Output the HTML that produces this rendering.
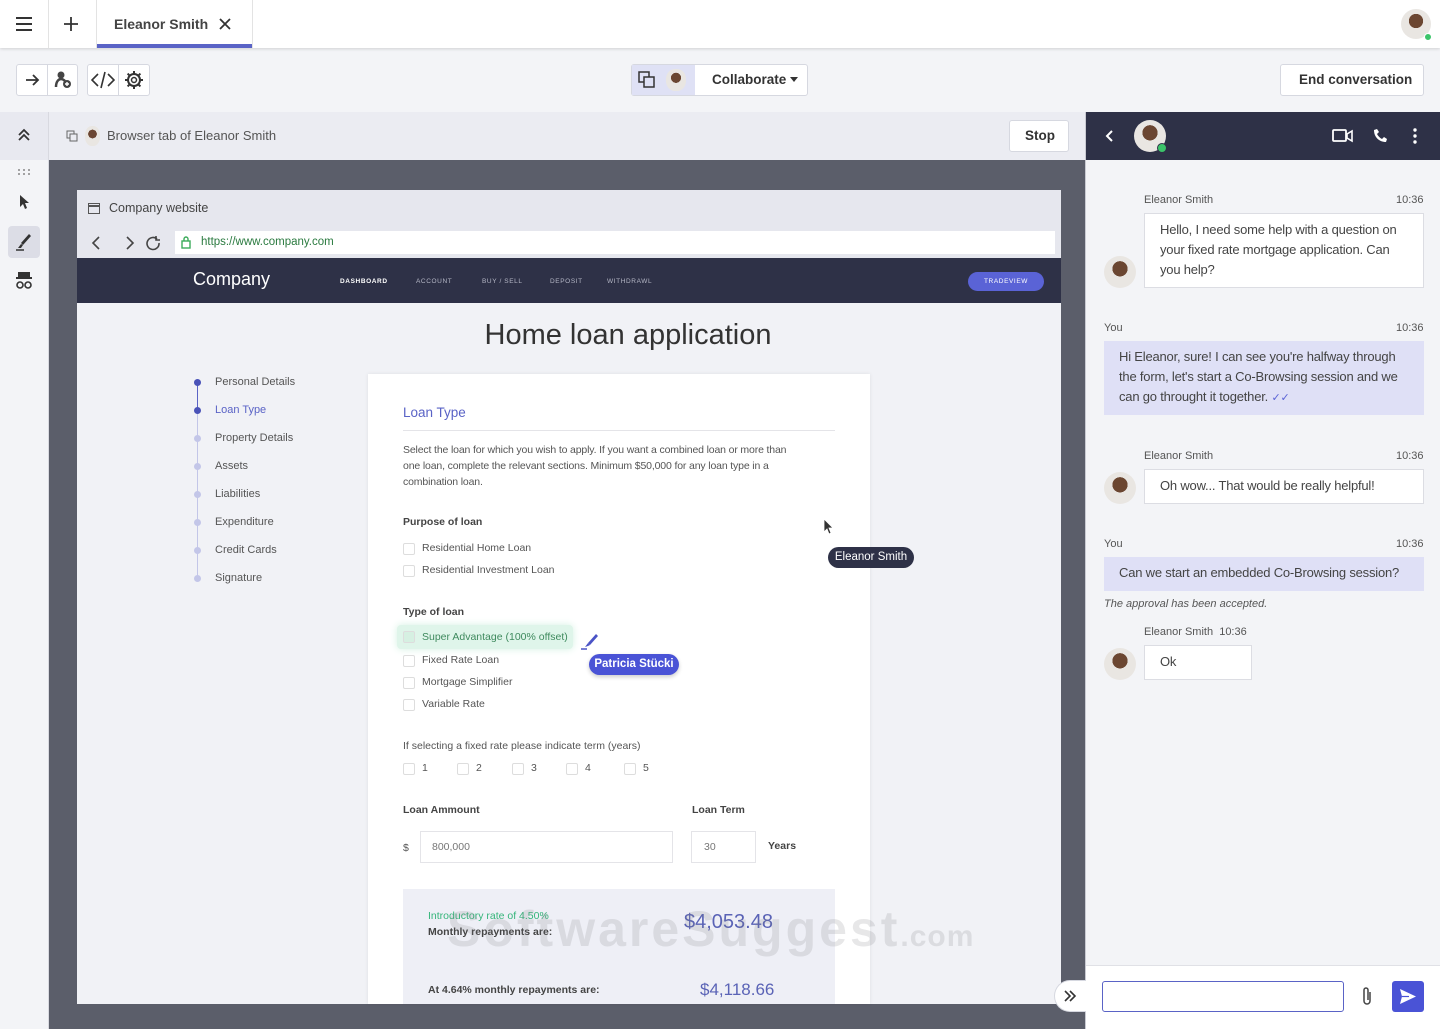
<!DOCTYPE html>
<html><head><meta charset="utf-8">
<style>
*{box-sizing:border-box;margin:0;padding:0}
body{width:1440px;height:1029px;overflow:hidden;font-family:"Liberation Sans",sans-serif;background:#f3f4f7;position:relative;color:#333}
.a{position:absolute}
.btn{position:absolute;background:#fff;border:1px solid #d6d8e0;border-radius:3px}
.av{position:absolute;border-radius:50%;background:radial-gradient(circle at 50% 40%,#6b4631 0 30%,#e9e6e2 31%);}
.step{position:absolute;left:215px;font-size:11px;color:#555}
.dot{position:absolute;left:194px;width:7px;height:7px;border-radius:50%;background:#c3c6e8}
.cb{position:absolute;width:12px;height:12px;border:1px solid #ddd;border-radius:2px;background:#fff}
.lbl{position:absolute;font-size:10.5px;color:#555}
.msg{position:absolute;background:#fff;border:1px solid #dcdde3;font-size:13px;letter-spacing:-0.2px;color:#444;line-height:20px;padding:6px 15px}
.you{position:absolute;background:#dfe0f6;font-size:13px;letter-spacing:-0.2px;color:#444;line-height:20px;padding:6px 15px}
.meta{position:absolute;font-size:11px;color:#555}
</style></head><body>
<!-- top bar -->
<div class="a" style="left:0;top:0;width:1440px;height:48px;background:#fff;box-shadow:0 1px 3px rgba(0,0,0,.15)"></div>
<svg class="a" style="left:15px;top:16px" width="18" height="16"><path d="M1 2h16M1 8h16M1 14h16" stroke="#333" stroke-width="2"/></svg>
<div class="a" style="left:48px;top:0;width:1px;height:48px;background:#e3e3e3"></div>
<svg class="a" style="left:64px;top:17px" width="14" height="14"><path d="M7 0v14M0 7h14" stroke="#333" stroke-width="1.8"/></svg>
<div class="a" style="left:96px;top:0;width:1px;height:48px;background:#e3e3e3"></div>
<div class="a" style="left:114px;top:16px;font-size:14px;font-weight:bold;color:#444">Eleanor Smith</div>
<svg class="a" style="left:219px;top:18px" width="12" height="12"><path d="M1 1l10 10M11 1L1 11" stroke="#333" stroke-width="1.8"/></svg>
<div class="a" style="left:252px;top:0;width:1px;height:48px;background:#e3e3e3"></div>
<div class="a" style="left:97px;top:44px;width:155px;height:4px;background:#5a63c6"></div>
<div class="av" style="left:1401px;top:9px;width:30px;height:30px"></div>
<div class="a" style="left:1424px;top:33px;width:8px;height:8px;border-radius:50%;background:#3cc46a;border:1px solid #fff"></div>

<!-- toolbar -->
<div class="btn" style="left:16px;top:64px;width:62px;height:32px"></div>
<div class="a" style="left:47px;top:64px;width:1px;height:32px;background:#d6d8e0"></div>
<svg class="a" style="left:24px;top:72px" width="16" height="16"><path d="M2 8h12M9 3l5 5-5 5" stroke="#333" stroke-width="1.8" fill="none"/></svg>
<svg class="a" style="left:54px;top:70px" width="18" height="20"><circle cx="7" cy="5" r="3.5" fill="#444"/><path d="M2 17c0-6 3-8 5-8s3 1 4 2" stroke="#444" stroke-width="2.5" fill="none"/><circle cx="13" cy="14" r="4" fill="#444"/><path d="M13 12v4M11 14h4" stroke="#fff" stroke-width="1.4"/></svg>
<div class="btn" style="left:87px;top:64px;width:63px;height:32px"></div>
<div class="a" style="left:118px;top:64px;width:1px;height:32px;background:#d6d8e0"></div>
<svg class="a" style="left:91px;top:71px" width="24" height="18"><path d="M7 3L1 9l6 6M17 3l6 6-6 6M14 1l-4 16" stroke="#333" stroke-width="1.6" fill="none"/></svg>
<svg class="a" style="left:124px;top:70px" width="20" height="20"><circle cx="10" cy="10" r="6" stroke="#333" stroke-width="2" fill="none"/><circle cx="10" cy="10" r="2.5" stroke="#333" stroke-width="1.5" fill="none"/><path d="M10 1v3M10 16v3M1 10h3M16 10h3M3.6 3.6l2.1 2.1M14.3 14.3l2.1 2.1M3.6 16.4l2.1-2.1M14.3 5.7l2.1-2.1" stroke="#333" stroke-width="2"/></svg>

<div class="btn" style="left:631px;top:64px;width:177px;height:32px"></div>
<div class="a" style="left:632px;top:65px;width:63px;height:30px;background:#dfe1f5"></div>
<svg class="a" style="left:638px;top:71px" width="18" height="18"><rect x="1" y="1" width="10" height="10" fill="none" stroke="#333" stroke-width="1.5"/><rect x="6" y="6" width="10" height="10" fill="#dfe1f5" stroke="#333" stroke-width="1.5"/></svg>
<div class="av" style="left:666px;top:69px;width:20px;height:22px;border-radius:45%"></div>
<div class="a" style="left:712px;top:72px;font-size:13.5px;font-weight:bold;color:#333">Collaborate</div>
<div class="a" style="left:790px;top:77px;border:4px solid transparent;border-top:5px solid #333"></div>
<div class="btn" style="left:1280px;top:64px;width:144px;height:32px"></div>
<div class="a" style="left:1299px;top:72px;font-size:13.5px;font-weight:bold;color:#333">End conversation</div>

<!-- left sidebar -->
<div class="a" style="left:0;top:112px;width:48px;height:48px;background:#e8e9f0"></div>
<div class="a" style="left:48px;top:112px;width:1px;height:917px;background:#d8d9e0"></div>
<svg class="a" style="left:17px;top:128px" width="14" height="14"><path d="M2 7l5-5 5 5M2 12l5-5 5 5" stroke="#333" stroke-width="1.8" fill="none"/></svg>
<svg class="a" style="left:17px;top:168px" width="14" height="8"><g fill="#888"><circle cx="2" cy="2" r="1"/><circle cx="7" cy="2" r="1"/><circle cx="12" cy="2" r="1"/><circle cx="2" cy="6" r="1"/><circle cx="7" cy="6" r="1"/><circle cx="12" cy="6" r="1"/></g></svg>
<svg class="a" style="left:19px;top:194px" width="12" height="16"><path d="M1 1v12l3-3 2 5 2-1-2-5h4z" fill="#333"/></svg>
<div class="a" style="left:8px;top:226px;width:32px;height:32px;border-radius:4px;background:#dcdde6"></div>
<svg class="a" style="left:15px;top:232px" width="18" height="20"><path d="M14 2l2 2-8 9-2-2z" fill="#333"/><path d="M6 12l-3 4h3l2-3" fill="#333"/><path d="M1 18h8" stroke="#333" stroke-width="1.5"/></svg>
<svg class="a" style="left:15px;top:272px" width="18" height="18"><path d="M4 1h10v4H4zM1 6h16" stroke="#333" stroke-width="2" fill="#333"/><circle cx="5" cy="13" r="3" stroke="#333" stroke-width="1.6" fill="none"/><circle cx="13" cy="13" r="3" stroke="#333" stroke-width="1.6" fill="none"/></svg>

<!-- browser tab header -->
<div class="a" style="left:49px;top:112px;width:1036px;height:48px;background:#ebecf2"></div>
<svg class="a" style="left:66px;top:130px" width="12" height="12"><rect x="1" y="1" width="7" height="7" fill="none" stroke="#666" stroke-width="1"/><rect x="4" y="4" width="7" height="7" fill="#ebecf2" stroke="#666" stroke-width="1"/></svg>
<div class="av" style="left:85px;top:126px;width:15px;height:20px;border-radius:45%"></div>
<div class="a" style="left:107px;top:128px;font-size:13px;color:#555">Browser tab of Eleanor Smith</div>
<div class="btn" style="left:1009px;top:120px;width:60px;height:32px"></div>
<div class="a" style="left:1025px;top:128px;font-size:13.5px;font-weight:bold;color:#333">Stop</div>

<!-- main dark area -->
<div class="a" style="left:49px;top:160px;width:1036px;height:869px;background:#5b5e6a"></div>
<!-- browser window -->
<div class="a" style="left:77px;top:190px;width:984px;height:814px;background:#f1f2f6;overflow:hidden">
  <div class="a" style="left:0;top:0;width:984px;height:68px;background:#e6e7ee"></div>
  <svg class="a" style="left:11px;top:13px" width="12" height="11"><rect x="0.5" y="0.5" width="11" height="10" fill="none" stroke="#555"/><path d="M0 3h12" stroke="#555" stroke-width="2"/></svg>
  <div class="a" style="left:32px;top:11px;font-size:12.5px;color:#444">Company website</div>
  <svg class="a" style="left:13px;top:45px" width="70" height="16"><path d="M9 2L3 8l6 6M37 2l6 6-6 6" stroke="#444" stroke-width="1.6" fill="none"/><path d="M76 4a6 6 0 1 0 2 4" stroke="#444" stroke-width="1.6" fill="none" transform="translate(-9 0)"/><path d="M66 1v4h4" stroke="#444" stroke-width="1.6" fill="none"/></svg>
  <div class="a" style="left:98px;top:41px;width:880px;height:23px;background:#fff"></div>
  <svg class="a" style="left:104px;top:46px" width="10" height="13"><rect x="1" y="5" width="8" height="7" fill="none" stroke="#3bab5a" stroke-width="1.4"/><path d="M3 5V3a2 2 0 0 1 4 0v2" stroke="#3bab5a" stroke-width="1.4" fill="none"/></svg>
  <div class="a" style="left:124px;top:46px;font-size:11.5px;color:#2a7a3f">https://www.company.com</div>
  <div class="a" style="left:0;top:68px;width:984px;height:45px;background:#2e3147"></div>
  <div class="a" style="left:116px;top:79px;font-size:18px;color:#fff">Company</div>
  <div class="a" style="left:263px;top:88px;font-size:6.5px;letter-spacing:.6px;color:#fff;font-weight:bold">DASHBOARD</div>
  <div class="a" style="left:339px;top:88px;font-size:6.5px;letter-spacing:.6px;color:#b5b7c6">ACCOUNT</div>
  <div class="a" style="left:405px;top:88px;font-size:6.5px;letter-spacing:.6px;color:#b5b7c6">BUY / SELL</div>
  <div class="a" style="left:473px;top:88px;font-size:6.5px;letter-spacing:.6px;color:#b5b7c6">DEPOSIT</div>
  <div class="a" style="left:530px;top:88px;font-size:6.5px;letter-spacing:.6px;color:#b5b7c6">WITHDRAWL</div>
  <div class="a" style="left:891px;top:82px;width:76px;height:19px;border-radius:10px;background:#5a63d6;color:#fff;font-size:6.5px;letter-spacing:.6px;text-align:center;line-height:19px">TRADEVIEW</div>
  <div class="a" style="left:0;top:129px;width:1102px;text-align:center;font-size:29px;color:#333">Home loan application</div>
</div>
<!-- stepper -->
<div class="a" style="left:197px;top:382px;width:1px;height:196px;background:#c3c6e8"></div>
<div class="a" style="left:197px;top:382px;width:1px;height:28px;background:#5a63c6"></div>
<div class="dot" style="top:379px;background:#4a53b8"></div><div class="step" style="top:376px">Personal Details</div>
<div class="dot" style="top:407px;background:#4a53b8"></div><div class="step" style="top:404px;color:#5a63c6">Loan Type</div>
<div class="dot" style="top:435px"></div><div class="step" style="top:432px">Property Details</div>
<div class="dot" style="top:463px"></div><div class="step" style="top:460px">Assets</div>
<div class="dot" style="top:491px"></div><div class="step" style="top:488px">Liabilities</div>
<div class="dot" style="top:519px"></div><div class="step" style="top:516px">Expenditure</div>
<div class="dot" style="top:547px"></div><div class="step" style="top:544px">Credit Cards</div>
<div class="dot" style="top:575px"></div><div class="step" style="top:572px">Signature</div>

<!-- card -->
<div class="a" style="left:368px;top:374px;width:502px;height:630px;background:#fff;box-shadow:0 0 4px rgba(0,0,0,.08)"></div>
<div class="a" style="left:403px;top:405px;font-size:13.5px;color:#5a63c6">Loan Type</div>
<div class="a" style="left:403px;top:430px;width:432px;height:1px;background:#e4e4e8"></div>
<div class="a" style="left:403px;top:442px;width:400px;font-size:10.5px;line-height:16px;color:#555;letter-spacing:-0.15px">Select the loan for which you wish to apply. If you want a combined loan or more than one loan, complete the relevant sections. Minimum $50,000 for any loan type in a combination loan.</div>
<div class="a" style="left:403px;top:516px;font-size:10.5px;font-weight:bold;color:#444">Purpose of loan</div>
<div class="cb" style="left:403px;top:543px"></div><div class="lbl" style="left:422px;top:542px">Residential Home Loan</div>
<div class="cb" style="left:403px;top:565px"></div><div class="lbl" style="left:422px;top:564px">Residential Investment Loan</div>
<div class="a" style="left:403px;top:606px;font-size:10.5px;font-weight:bold;color:#444">Type of loan</div>
<div class="a" style="left:397px;top:625px;width:176px;height:24px;background:#dff5ea;border-radius:4px;box-shadow:0 0 8px #d3f1e2"></div>
<div class="cb" style="left:403px;top:631px;background:#d6f0e2"></div><div class="lbl" style="left:422px;top:631px;color:#3f8a5e">Super Advantage (100% offset)</div>
<div class="cb" style="left:403px;top:655px"></div><div class="lbl" style="left:422px;top:654px">Fixed Rate Loan</div>
<div class="cb" style="left:403px;top:677px"></div><div class="lbl" style="left:422px;top:676px">Mortgage Simplifier</div>
<div class="cb" style="left:403px;top:699px"></div><div class="lbl" style="left:422px;top:698px">Variable Rate</div>
<svg class="a" style="left:580px;top:632px" width="20" height="20"><path d="M16 2l2 2-8 9-2-2z" fill="#4a53c6"/><path d="M8 11l-3 4 3-1 2-1" fill="#4a53c6"/><path d="M1 17h6" stroke="#4a53c6" stroke-width="1.5"/></svg>
<div class="a" style="left:589px;top:654px;width:90px;height:21px;border-radius:11px;background:#4a53d6;color:#fff;font-size:11.5px;font-weight:bold;text-align:center;line-height:21px;box-shadow:0 2px 4px rgba(0,0,0,.2)">Patricia Stücki</div>
<div class="a" style="left:403px;top:740px;font-size:10.5px;color:#555">If selecting a fixed rate please indicate term (years)</div>
<div class="cb" style="left:403px;top:763px"></div><div class="lbl" style="left:422px;top:762px">1</div>
<div class="cb" style="left:457px;top:763px"></div><div class="lbl" style="left:476px;top:762px">2</div>
<div class="cb" style="left:512px;top:763px"></div><div class="lbl" style="left:531px;top:762px">3</div>
<div class="cb" style="left:566px;top:763px"></div><div class="lbl" style="left:585px;top:762px">4</div>
<div class="cb" style="left:624px;top:763px"></div><div class="lbl" style="left:643px;top:762px">5</div>
<div class="a" style="left:403px;top:804px;font-size:10.5px;font-weight:bold;color:#444">Loan Ammount</div>
<div class="a" style="left:692px;top:804px;font-size:10.5px;font-weight:bold;color:#444">Loan Term</div>
<div class="lbl" style="left:403px;top:842px">$</div>
<div class="a" style="left:420px;top:831px;width:253px;height:32px;border:1px solid #e4e4e8"></div>
<div class="lbl" style="left:432px;top:841px;color:#777">800,000</div>
<div class="a" style="left:691px;top:831px;width:65px;height:32px;border:1px solid #e4e4e8"></div>
<div class="lbl" style="left:704px;top:841px;color:#777">30</div>
<div class="a" style="left:768px;top:840px;font-size:10.5px;font-weight:bold;color:#444">Years</div>
<div class="a" style="left:403px;top:889px;width:432px;height:115px;background:#eeeff6"></div>
<div class="a" style="left:428px;top:910px;font-size:10.5px;color:#35b57a">Introductory rate of 4.50%</div>
<div class="a" style="left:428px;top:926px;font-size:10.5px;font-weight:bold;color:#444">Monthly repayments are:</div>
<div class="a" style="left:684px;top:911px;font-size:20px;color:#5a63b6">$4,053.48</div>
<div class="a" style="left:428px;top:984px;font-size:10.5px;font-weight:bold;color:#444">At 4.64% monthly repayments are:</div>
<div class="a" style="left:700px;top:980px;font-size:17px;color:#5a63b6">$4,118.66</div>
<div class="a" style="left:447px;top:900px;font-size:50px;font-weight:bold;color:rgba(120,120,130,.18);letter-spacing:3px">SoftwareSuggest<span style="font-size:30px;letter-spacing:1px">.com</span></div>

<!-- cursor & label -->
<svg class="a" style="left:823px;top:518px" width="12" height="18"><path d="M1 1v13l3-3 2 5 2-1-2-5h4z" fill="#333" stroke="#fff" stroke-width=".8"/></svg>
<div class="a" style="left:828px;top:547px;width:86px;height:21px;border-radius:11px;background:#2e3147;color:#fff;font-size:11.5px;text-align:center;line-height:21px">Eleanor Smith</div>

<!-- chat panel -->
<div class="a" style="left:1085px;top:112px;width:1px;height:917px;background:#c9cad2"></div>
<div class="a" style="left:1086px;top:112px;width:354px;height:48px;background:#2e3147"></div>
<svg class="a" style="left:1104px;top:129px" width="10" height="14"><path d="M8 2L3 7l5 5" stroke="#fff" stroke-width="2" fill="none"/></svg>
<div class="av" style="left:1134px;top:120px;width:32px;height:32px"></div>
<div class="a" style="left:1157px;top:143px;width:10px;height:10px;border-radius:50%;background:#3cc46a;border:1px solid #2e3147"></div>
<svg class="a" style="left:1332px;top:128px" width="22" height="16"><rect x="1" y="2" width="13" height="11" rx="1" fill="none" stroke="#fff" stroke-width="1.8"/><path d="M15 6l5-3v10l-5-3z" fill="none" stroke="#fff" stroke-width="1.6"/></svg>
<svg class="a" style="left:1372px;top:128px" width="16" height="16"><path d="M2 2c0 7 5 12 12 12l1-3-3-2-2 2c-2-1-4-3-5-5l2-2-2-3z" fill="#fff"/></svg>
<svg class="a" style="left:1413px;top:127px" width="4" height="18"><circle cx="2" cy="3" r="1.7" fill="#fff"/><circle cx="2" cy="9" r="1.7" fill="#fff"/><circle cx="2" cy="15" r="1.7" fill="#fff"/></svg>

<div class="meta" style="left:1144px;top:194px">Eleanor Smith</div><div class="meta" style="left:1396px;top:194px">10:36</div>
<div class="msg" style="left:1144px;top:213px;width:280px;height:75px">Hello, I need some help with a question on your fixed rate mortgage application. Can you help?</div>
<div class="av" style="left:1104px;top:256px;width:32px;height:32px"></div>
<div class="meta" style="left:1104px;top:322px">You</div><div class="meta" style="left:1396px;top:322px">10:36</div>
<div class="you" style="left:1104px;top:341px;width:320px;height:74px">Hi Eleanor, sure! I can see you're halfway through the form, let's start a Co-Browsing session and we can go throught it together. <span style="color:#5a63d6;font-size:11px">✓✓</span></div>
<div class="meta" style="left:1144px;top:450px">Eleanor Smith</div><div class="meta" style="left:1396px;top:450px">10:36</div>
<div class="msg" style="left:1144px;top:469px;width:280px;height:35px">Oh wow... That would be really helpful!</div>
<div class="av" style="left:1104px;top:472px;width:32px;height:32px"></div>
<div class="meta" style="left:1104px;top:538px">You</div><div class="meta" style="left:1396px;top:538px">10:36</div>
<div class="you" style="left:1104px;top:557px;width:320px;height:34px;white-space:nowrap">Can we start an embedded Co-Browsing session?</div>
<div class="meta" style="left:1104px;top:598px;font-style:italic">The approval has been accepted.</div>
<div class="meta" style="left:1144px;top:626px">Eleanor Smith&nbsp;&nbsp;10:36</div>
<div class="msg" style="left:1144px;top:645px;width:108px;height:35px">Ok</div>
<div class="av" style="left:1104px;top:648px;width:32px;height:32px"></div>

<div class="a" style="left:1086px;top:965px;width:354px;height:64px;background:#fff;border-top:1px solid #e0e1e6"></div>
<div class="a" style="left:1054px;top:980px;width:32px;height:32px;border-radius:16px 0 0 16px;background:#fff;border:1px solid #d6d8e0;border-right:none"></div>
<svg class="a" style="left:1063px;top:990px" width="14" height="12"><path d="M2 1l5 5-5 5M7 1l5 5-5 5" stroke="#333" stroke-width="1.6" fill="none"/></svg>
<div class="a" style="left:1102px;top:981px;width:242px;height:31px;border:1.5px solid #5a63c6;border-radius:3px;background:#fff"></div>
<svg class="a" style="left:1361px;top:986px" width="12" height="20"><path d="M9 6v9a3 3 0 0 1-6 0V4a2 2 0 0 1 4 0v10" stroke="#444" stroke-width="1.5" fill="none"/></svg>
<div class="a" style="left:1392px;top:981px;width:32px;height:31px;border-radius:3px;background:#4a53d6"></div>
<svg class="a" style="left:1399px;top:988px" width="18" height="17"><path d="M1 1l16 7.5L1 16l2-7.5z" fill="#fff"/><path d="M3 8.5h7" stroke="#4a53d6" stroke-width="1.2"/></svg>
</body></html>
